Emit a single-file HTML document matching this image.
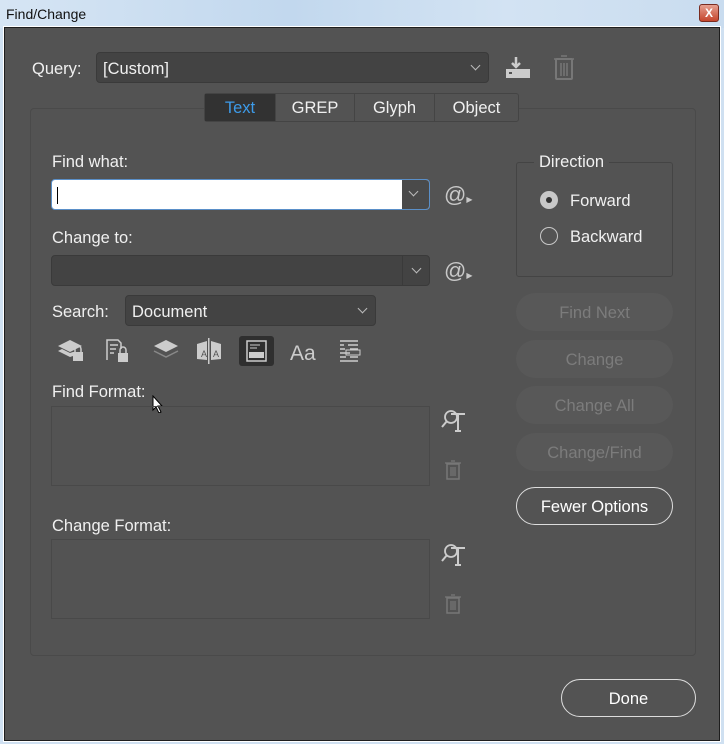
<!DOCTYPE html>
<html><head><meta charset="utf-8"><style>
*{margin:0;padding:0;box-sizing:border-box}
body{width:724px;height:744px;overflow:hidden;background:#cfe0f1;font-family:"Liberation Sans",sans-serif;position:relative}
.title{position:absolute;left:0;top:0;width:724px;height:28px;background:linear-gradient(90deg,#d6e5f4,#c2d8ee 40%,#d3e3f3 70%,#c9dcef);}
.title span{position:absolute;left:6px;top:6px;font-size:14px;color:#111}
.close{position:absolute;left:699px;top:4px;width:20px;height:18px;background:linear-gradient(#e6a090,#c5452c);border:1px solid #7a2c20;border-radius:3px;color:#fff;font-size:12px;font-weight:bold;text-align:center;line-height:16px}
.panel{position:absolute;left:3px;top:26px;width:718px;height:716px;border:1px solid #fff;background:#535353}
.panel .in{position:absolute;inset:0;border:1px solid #1e1e1e}
.a{position:absolute}
.lbl{position:absolute;color:#f0f0f0;font-size:16.5px}
.dd{position:absolute;background:#434343;border:1px solid #3a3a3a;border-radius:4px}
.chev{position:absolute;width:7px;height:7px;border-right:1px solid #bbb;border-bottom:1px solid #bbb;transform:rotate(45deg)}
.btn{position:absolute;left:516px;width:157px;height:38px;border-radius:19px;background:#585858;color:#7c7c7c;font-size:16.5px;text-align:center;line-height:40px}
.box{position:absolute;border:1px solid #494949;}
</style></head><body>
<div class="title"><span>Find/Change</span><div class="close">X</div></div>
<div class="panel"><div class="in"></div></div>

<div class="lbl" style="left:32px;top:60px">Query:</div>
<div class="dd" style="left:96px;top:52px;width:393px;height:31px"><span style="position:absolute;left:6px;top:7px;color:#f0f0f0;font-size:16.5px">[Custom]</span><div class="chev" style="left:375px;top:9px"></div></div>
<svg class="a" style="left:504px;top:56px" width="28" height="24" viewBox="0 0 28 24"><path d="M12 1v9M8 7l4 4 4-4" stroke="#ccc" stroke-width="2.5" fill="none"/><rect x="2" y="13" width="24" height="9" fill="#ccc"/><rect x="5" y="16" width="3" height="2" fill="#535353"/></svg>
<svg class="a" style="left:553px;top:55px" width="22" height="26" viewBox="0 0 22 26"><rect x="3" y="4" width="16" height="20" rx="1" fill="none" stroke="#777" stroke-width="2"/><path d="M1 4h20M8 1h6M8 8v13M11 8v13M14 8v13" stroke="#777" stroke-width="1.5"/></svg>

<div class="a" style="left:30px;top:108px;width:666px;height:548px;border:1px solid #4a4a4a;border-radius:4px"></div>
<div class="a" style="left:204px;top:93px;width:315px;height:29px;background:#535353;border:1px solid #444;border-radius:3px;display:flex;font-size:16.5px;color:#f0f0f0">
<div style="width:70px;background:#323232;color:#3d9be9;text-align:center;line-height:29px">Text</div>
<div style="width:79px;border-left:1px solid #444;text-align:center;line-height:29px">GREP</div>
<div style="width:80px;border-left:1px solid #444;text-align:center;line-height:29px">Glyph</div>
<div style="flex:1;border-left:1px solid #444;text-align:center;line-height:29px">Object</div></div>

<div class="lbl" style="left:52px;top:153px">Find what:</div>
<div class="a" style="left:51px;top:179px;width:379px;height:31px;border:1px solid #5a8fc8;border-radius:4px;background:#fff;overflow:hidden"><div style="position:absolute;left:5px;top:7px;width:1px;height:17px;background:#000"></div><div style="position:absolute;right:0;top:0;width:27px;height:29px;background:#4a4a4a"></div><div class="chev" style="left:358px;top:8px"></div></div>
<div class="lbl" style="left:444px;top:182px;font-size:22px;color:#c8c8c8">@<span style="font-size:8px">▶</span></div>

<div class="lbl" style="left:52px;top:229px">Change to:</div>
<div class="dd" style="left:51px;top:255px;width:379px;height:31px"><div style="position:absolute;left:350px;top:0;width:1px;height:29px;background:#3a3a3a"></div><div class="chev" style="left:361px;top:9px"></div></div>
<div class="lbl" style="left:444px;top:258px;font-size:22px;color:#c8c8c8">@<span style="font-size:8px">▶</span></div>

<div class="lbl" style="left:52px;top:303px">Search:</div>
<div class="dd" style="left:125px;top:295px;width:251px;height:31px"><span style="position:absolute;left:6px;top:7px;color:#f0f0f0;font-size:16.5px">Document</span><div class="chev" style="left:233px;top:9px"></div></div>

<svg class="a" style="left:56px;top:336px" width="310" height="30" viewBox="0 0 310 30">
<g fill="#ccc"><path d="M2 10l12-6 12 6-12 6z"/><path d="M2 15l4-2 8 4 3-1v4l-3 1z"/><rect x="17" y="16" width="10" height="9"/><path d="M19 16v-3a3 3 0 0 1 6 0v3" stroke="#ccc" stroke-width="1.5" fill="none"/></g>
<g fill="none" stroke="#ccc" stroke-width="1.5"><path d="M51 24V4h11l3 3v6"/><path d="M54 9h8M54 13h6M54 17h4"/></g><rect x="62" y="17" width="10" height="9" fill="#ccc"/><path d="M64 17v-3a3 3 0 0 1 6 0v3" stroke="#ccc" stroke-width="1.5" fill="none"/>
<path d="M98 10l12-6 12 6-12 6z" fill="#ccc"/><path d="M98 15l12 6 12-6" stroke="#888" stroke-width="1.5" fill="none"/>
<g fill="#ccc"><path d="M141 8l10-3v19l-10-1z"/><path d="M155 5l10 3v15l-10 1z"/><rect x="152" y="2" width="1.5" height="26"/></g>
<text x="145" y="21" font-size="9" fill="#535353" font-family="Liberation Sans">A</text><text x="157" y="21" font-size="9" fill="#535353" font-family="Liberation Sans">A</text>
<rect x="183" y="0" width="35" height="30" rx="3" fill="#2f2f2f"/><rect x="191" y="5" width="19" height="20" fill="none" stroke="#ccc" stroke-width="1.5"/><path d="M194 9h10M194 12h7" stroke="#ccc"/><rect x="193" y="16" width="15" height="6" fill="#ccc"/>
<text x="234" y="24" font-size="21" fill="#ccc" font-family="Liberation Sans">Aa</text>
<g stroke="#ccc" stroke-width="1.5"><path d="M284 5h18M284 9h4M292 9h10M284 13h5M294 13h8M284 17h10M284 21h6M294 21h8M284 25h18"/></g><rect x="290" y="14" width="14" height="5" fill="none" stroke="#ccc"/>
</svg>

<div class="lbl" style="left:52px;top:383px">Find Format:</div>
<svg class="a" style="left:152px;top:395px" width="12" height="18" viewBox="0 0 12 18"><path d="M1 1v14l3-3 3 6 2-1-3-6h4z" fill="#fff" stroke="#000"/></svg>
<div class="box" style="left:51px;top:406px;width:379px;height:80px"></div>
<svg class="a" style="left:441px;top:407px" width="26" height="26" viewBox="0 0 26 26"><circle cx="10" cy="10" r="6" fill="none" stroke="#ccc" stroke-width="1.8"/><path d="M6 14l-5 6" stroke="#ccc" stroke-width="2"/><path d="M10 7h14M17 7v17M14 24h6" stroke="#ccc" stroke-width="2"/></svg>
<svg class="a" style="left:444px;top:460px" width="18" height="20" viewBox="0 0 18 20"><rect x="3" y="4" width="12" height="15" fill="none" stroke="#777" stroke-width="1.5"/><path d="M1 3h16M7 1h4M7 7v9M9 7v9M11 7v9" stroke="#777" stroke-width="1.2"/></svg>

<div class="lbl" style="left:52px;top:517px">Change Format:</div>
<div class="box" style="left:51px;top:539px;width:379px;height:80px"></div>
<svg class="a" style="left:441px;top:541px" width="26" height="26" viewBox="0 0 26 26"><circle cx="10" cy="10" r="6" fill="none" stroke="#ccc" stroke-width="1.8"/><path d="M6 14l-5 6" stroke="#ccc" stroke-width="2"/><path d="M10 7h14M17 7v17M14 24h6" stroke="#ccc" stroke-width="2"/></svg>
<svg class="a" style="left:444px;top:594px" width="18" height="20" viewBox="0 0 18 20"><rect x="3" y="4" width="12" height="15" fill="none" stroke="#777" stroke-width="1.5"/><path d="M1 3h16M7 1h4M7 7v9M9 7v9M11 7v9" stroke="#777" stroke-width="1.2"/></svg>

<div class="a" style="left:516px;top:162px;width:157px;height:115px;border:1px solid #444;border-radius:3px"></div>
<div class="lbl" style="left:534px;top:153px;background:#535353;padding:0 5px">Direction</div>
<div class="a" style="left:540px;top:191px;width:18px;height:18px;border-radius:50%;background:#c8c8c8"><div style="position:absolute;left:6px;top:6px;width:6px;height:6px;border-radius:50%;background:#333"></div></div>
<div class="lbl" style="left:570px;top:192px">Forward</div>
<div class="a" style="left:540px;top:227px;width:18px;height:18px;border-radius:50%;border:1.5px solid #c8c8c8"></div>
<div class="lbl" style="left:570px;top:228px">Backward</div>

<div class="btn" style="top:293px">Find Next</div>
<div class="btn" style="top:340px">Change</div>
<div class="btn" style="top:386px">Change All</div>
<div class="btn" style="top:433px">Change/Find</div>
<div class="btn" style="top:487px;background:none;border:1px solid #ddd;color:#fff;line-height:38px">Fewer Options</div>
<div class="btn" style="left:561px;top:679px;width:135px;background:none;border:1px solid #ddd;color:#fff;line-height:38px">Done</div>
</body></html>
